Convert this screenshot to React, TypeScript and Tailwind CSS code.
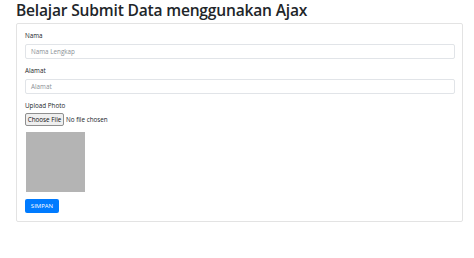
import React from "react";

export default function App() {
  return (
    <div className="min-h-[258px] bg-white pl-4 text-[#212529]" style={{ fontFamily: '"Open Sans", "Noto Sans", sans-serif' }}>
      <h1 className="text-[15.6px] font-semibold leading-[20px] tracking-[-0.2px] whitespace-nowrap">Belajar Submit Data menggunakan Ajax</h1>
      <div className="mt-[3px] flex w-[447px] flex-col rounded-[2px] border border-[#e3e3e3] pl-[8px] pr-[7px] pt-[7px] pb-[8px]">
        <label className="h-[10px] text-[6.3px] leading-[10px]">Nama</label>
        <div className="mt-[3px] flex h-[15px] items-center rounded-[2px] border border-[#e1e4e8] px-[5px] text-[6.3px] text-[#8a9096]">Nama Lengkap</div>
        <label className="mt-[7px] h-[10px] text-[6.3px] leading-[10px]">Alamat</label>
        <div className="mt-[3px] flex h-[15px] items-center rounded-[2px] border border-[#e1e4e8] px-[5px] text-[6.3px] text-[#8a9096]">Alamat</div>
        <label className="mt-[7px] h-[10px] text-[6.3px] leading-[10px]">Upload Photo</label>
        <div className="mt-[2px] flex h-[13px] items-center gap-[2px] whitespace-nowrap">
          <div className="flex h-[13px] w-[39px] items-center justify-center rounded-[2px] border border-[#8f8f8f] bg-[#efefef] text-[6.3px] text-[#111]">Choose File</div>
          <span className="text-[6.3px]">No file chosen</span>
        </div>
        <div className="mt-[6px] ml-px h-[60px] w-[59px] bg-[#b4b4b4]"></div>
        <div className="mt-[7px] flex h-[14px] w-[34px] items-center justify-center rounded-[2px] bg-[#007bff] text-[6px] text-white">SIMPAN</div>
      </div>
    </div>
  );
}
